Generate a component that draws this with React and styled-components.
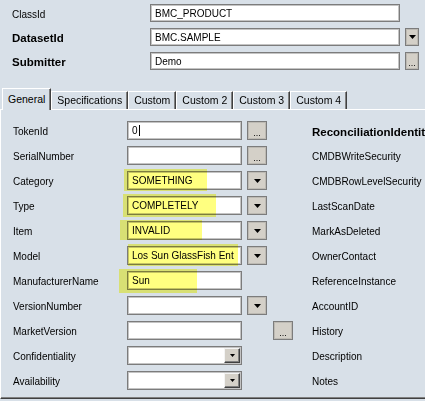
import React from "react";
import styled, { createGlobalStyle } from "styled-components";

const GlobalStyle = createGlobalStyle`
  html, body {
    margin: 0;
    padding: 0;
  }
  body {
    font-family: "Liberation Sans", Arial, sans-serif;
    background: #d8e0e8;
    color: #000;
  }
`;

const Screen = styled.div`
  position: relative;
  width: 425px;
  height: 401px;
  overflow: hidden;
  background: #d8e0e8;
`;

const TopForm = styled.div`
  display: grid;
  grid-template-columns: 138px 250px 1fr;
  grid-auto-rows: 24px;
  align-items: center;
  padding: 1px 0 0 12px;
`;

const Label = styled.div`
  font-size: ${(p) => (p.$bold ? "11.5px" : "10px")};
  font-weight: ${(p) => (p.$bold ? "bold" : "normal")};
  white-space: nowrap;
  padding-top: 2px;
`;

const RightLabel = styled(Label)`
  padding-left: 18px;
`;

const Field = styled.div`
  box-sizing: border-box;
  display: flex;
  align-items: center;
  width: ${(p) => p.$width || 115}px;
  height: ${(p) => p.$height || 19}px;
  background: #fff;
  border: 1px solid #7c7c7c;
  box-shadow: inset 0 0 0 1px #c4c4c4;
  font-size: 10px;
  overflow: hidden;
`;

const FieldText = styled.span`
  flex: 1;
  padding-left: 4px;
  margin-right: 3px;
  white-space: nowrap;
  overflow: hidden;
`;

const Caret = styled.span`
  display: inline-block;
  width: 1px;
  height: 11px;
  background: #000;
  vertical-align: middle;
  margin-left: 1px;
`;

const SideButton = styled.div`
  box-sizing: border-box;
  display: flex;
  align-items: center;
  justify-content: center;
  margin-left: 5px;
  width: ${(p) => p.$width || 20}px;
  height: ${(p) => p.$height || 19}px;
  background: #d4d0c8;
  border: 1px solid #7c7c7c;
  box-shadow: inset 0 0 0 1px #bdbab3;
  font-size: 9px;
  line-height: 1;
  padding-top: 5px;
`;

const ArrowButton = styled(SideButton)`
  padding-top: 0;
`;

const InnerArrow = styled.div`
  box-sizing: border-box;
  display: flex;
  align-items: center;
  justify-content: center;
  width: 16px;
  height: 15px;
  margin-right: 1px;
  background: #d4d0c8;
  border-top: 1px solid #f4f4f4;
  border-left: 1px solid #f4f4f4;
  border-right: 1px solid #404040;
  border-bottom: 1px solid #404040;
  box-shadow: inset -1px -1px 0 #808080;
`;

const TabStrip = styled.div`
  display: flex;
  align-items: flex-end;
  height: 21px;
  margin-top: 15px;
  padding-left: 2px;
`;

const Tab = styled.div`
  position: relative;
  box-sizing: border-box;
  height: ${(p) => (p.$active ? 22 : 18)}px;
  margin-bottom: ${(p) => (p.$active ? -1 : 0)}px;
  z-index: ${(p) => (p.$active ? 1 : 0)};
  padding: ${(p) => (p.$active ? "3px 5px 0" : "1px 5px 0")};
  background: #d8e0e8;
  border-top: 1px solid #ffffff;
  border-left: 1px solid #ffffff;
  border-right: 1px solid #404040;
  box-shadow: inset -1px 0 0 #808080;
  font-size: 10.5px;
  line-height: 15px;
  white-space: nowrap;
`;

const Panel = styled.div`
  display: grid;
  grid-template-columns: 114px 115px 26px 26px 1fr;
  grid-auto-rows: 25px;
  align-items: center;
  height: 290px;
  box-sizing: border-box;
  padding: 8px 0 5px 12px;
  border-top: 1px solid #ffffff;
  border-left: 1px solid #ffffff;
  border-bottom: 1px solid #404040;
  box-shadow: inset 0 -1px 0 #808080;
`;

const Marker = styled.div`
  position: absolute;
  background: #ffff80;
  mix-blend-mode: multiply;
  pointer-events: none;
`;

function Arrow({ small }) {
  return small ? (
    <svg width="5" height="3" viewBox="0 0 5 3">
      <polygon points="0,0 5,0 2.5,3" fill="#000" />
    </svg>
  ) : (
    <svg width="7" height="4" viewBox="0 0 7 4">
      <polygon points="0,0 7,0 3.5,4" fill="#000" />
    </svg>
  );
}

const rows = [
  { label: "TokenId", value: "0", caret: true, btn: "dots", right: "ReconciliationIdentity", bold: true },
  { label: "SerialNumber", value: "", btn: "dots", right: "CMDBWriteSecurity" },
  { label: "Category", value: "SOMETHING", btn: "arrow", right: "CMDBRowLevelSecurity" },
  { label: "Type", value: "COMPLETELY", btn: "arrow", right: "LastScanDate" },
  { label: "Item", value: "INVALID", btn: "arrow", right: "MarkAsDeleted" },
  { label: "Model", value: "Los Sun GlassFish Ent", btn: "arrow", right: "OwnerContact" },
  { label: "ManufacturerName", value: "Sun", right: "ReferenceInstance" },
  { label: "VersionNumber", value: "", btn: "arrow", right: "AccountID" },
  { label: "MarketVersion", value: "", btn2: "dots", right: "History" },
  { label: "Confidentiality", value: "", combo: true, right: "Description" },
  { label: "Availability", value: "", combo: true, right: "Notes" },
];

const markers = [
  { left: 124, top: 169, width: 83, height: 22 },
  { left: 123, top: 194, width: 93, height: 23 },
  { left: 120, top: 220, width: 82, height: 20 },
  { left: 128, top: 244, width: 110, height: 22 },
  { left: 119, top: 269, width: 78, height: 24 },
];

const tabs = ["General", "Specifications", "Custom", "Custom 2", "Custom 3", "Custom 4"];

function renderButton(kind) {
  if (kind === "dots") return <SideButton>...</SideButton>;
  if (kind === "arrow")
    return (
      <ArrowButton>
        <Arrow />
      </ArrowButton>
    );
  return <span />;
}

export default function App() {
  return (
    <Screen>
      <GlobalStyle />
      <TopForm>
        <Label>ClassId</Label>
        <Field $width={250} $height={18}>
          <FieldText>BMC_PRODUCT</FieldText>
        </Field>
        <span />

        <Label $bold>DatasetId</Label>
        <Field $width={250} $height={18}>
          <FieldText>BMC.SAMPLE</FieldText>
        </Field>
        <ArrowButton $width={14} $height={18}>
          <Arrow />
        </ArrowButton>

        <Label $bold>Submitter</Label>
        <Field $width={250} $height={18}>
          <FieldText>Demo</FieldText>
        </Field>
        <SideButton $width={14} $height={18}>...</SideButton>
      </TopForm>

      <TabStrip>
        {tabs.map((t, i) => (
          <Tab key={t} $active={i === 0}>
            {t}
          </Tab>
        ))}
      </TabStrip>

      <Panel>
        {rows.map((r) => (
          <React.Fragment key={r.label}>
            <Label>{r.label}</Label>
            <Field>
              <FieldText>
                {r.value}
                {r.caret && <Caret />}
              </FieldText>
              {r.combo && (
                <InnerArrow>
                  <Arrow small />
                </InnerArrow>
              )}
            </Field>
            {renderButton(r.btn)}
            {renderButton(r.btn2)}
            <RightLabel $bold={r.bold}>{r.right}</RightLabel>
          </React.Fragment>
        ))}
      </Panel>

      {markers.map((m, i) => (
        <Marker key={i} style={m} />
      ))}
    </Screen>
  );
}
